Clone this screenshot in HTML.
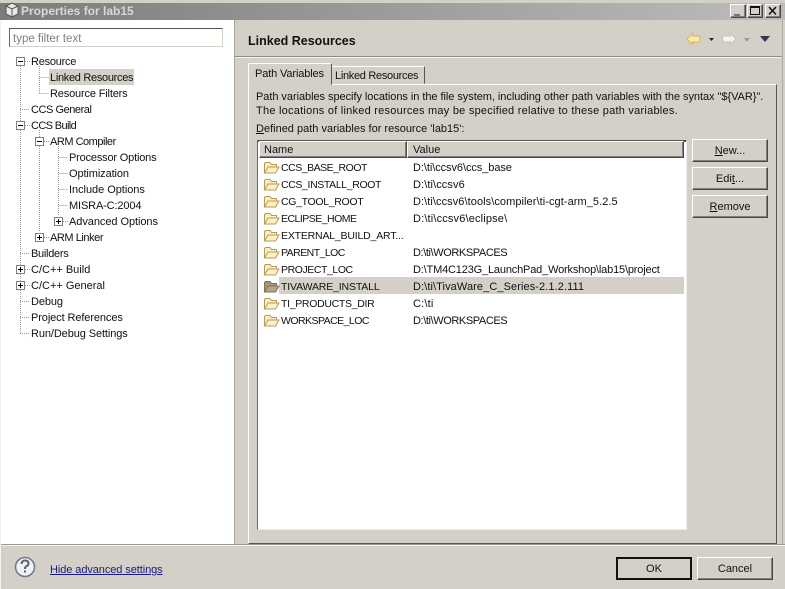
<!DOCTYPE html>
<html><head><meta charset="utf-8"><style>
html,body{margin:0;padding:0;width:785px;height:589px;overflow:hidden;background:#d4d0c8}
body{position:relative;font-family:"Liberation Sans",sans-serif;font-size:11px;color:#111}
.a,.t,.b{position:absolute}
.t{white-space:nowrap;line-height:14px;height:14px}
.n{font-size:10.5px}
.b{box-sizing:border-box;background:#d4d0c8;border:1px solid;border-color:#fff #484848 #484848 #fff;box-shadow:inset -1px -1px 0 #808080;text-align:center;line-height:23px}
svg{position:absolute;left:0;top:0}
u{text-underline-offset:1px}
</style></head><body>
<div class="a" style="left:0;top:0;width:785px;height:3px;background:#d4d0c8"></div>
<div class="a" style="left:0;top:3px;width:785px;height:17px;background:linear-gradient(90deg,#7c7c7c,#bcbcbc)"></div>
<div class="t" style="left:21px;top:4px;color:#d8d8d8;font-weight:bold;font-size:12px;line-height:15px">Properties for lab15</div>
<div class="a" style="left:1px;top:20px;width:233px;height:524px;background:#fff"></div>
<div class="a" style="left:234px;top:20px;width:1px;height:524px;background:#a8a59e"></div>
<div class="a" style="left:0;top:544px;width:785px;height:1px;background:#9a978f"></div>
<div class="a" style="left:0;top:545px;width:785px;height:1px;background:#f4f3ef"></div>
<div class="a" style="left:782px;top:20px;width:1px;height:525px;background:#aaa"></div>
<div class="a" style="left:0;top:20px;width:1px;height:569px;background:#f4f3ef"></div>
<div class="a" style="box-sizing:border-box;left:9px;top:28px;width:214px;height:19px;background:#fff;border:1px solid;border-color:#555 #d4d0c8 #d4d0c8 #666"></div>
<div class="t" style="left:13px;top:32px;color:#808080;font-size:11.5px">type filter text</div>

<div class="a" style="left:49px;top:69px;width:85px;height:16px;background:#d4d0c8"></div>
<svg width="785" height="589">
<defs>
<g id="fd"><path d="M.5 12V2.500L1.500 1.500H6L7.500 3.500H12.500V6" fill="#fbeec3" stroke="#b59a55"/><path d="M.5 12L4 6H15L11.500 12Z" fill="#fdf1c8" stroke="#b59a55"/></g>
<g id="pl"><rect x=".5" y=".5" width="8" height="8" fill="#fff" stroke="#808080"/><path d="M2 4.500H7" stroke="#000"/></g>
<g id="pp"><rect x=".5" y=".5" width="8" height="8" fill="#fff" stroke="#808080"/><path d="M2 4.500H7M4.500 2V7" stroke="#000"/></g>
</defs>
<g stroke="#999" stroke-dasharray="1 1" fill="none">
<path d="M20.500 66V333M39.500 66V93M39.500 77.500H49M39.500 93.500H49M25 61.500H30M20 109.500H30M25 125.500H30M20 253.500H30M25 269.500H30M25 285.500H30M20 301.500H30M20 317.500H30M20 333.500H30"/>
<path d="M39.500 130V232M44 141.500H49M58.500 146V216M58.500 157.500H68M58.500 173.500H68M58.500 189.500H68M58.500 205.500H68M63 221.500H68M44 237.500H49"/>
</g>
<use href="#pl" x="16" y="57"/><use href="#pl" x="16" y="121"/><use href="#pl" x="35" y="137"/>
<use href="#pp" x="54" y="217"/><use href="#pp" x="35" y="233"/><use href="#pp" x="16" y="265"/><use href="#pp" x="16" y="281"/>
</svg>
<div class="t" style="left:31px;top:55px;letter-spacing:-.24px">Resource</div>
<div class="t" style="left:50px;top:71px;letter-spacing:-.3px">Linked Resources</div>
<div class="t" style="left:50px;top:87px;letter-spacing:-.16px">Resource Filters</div>
<div class="t" style="left:31px;top:103px;letter-spacing:-.45px">CCS General</div>
<div class="t" style="left:31px;top:119px;letter-spacing:-.63px">CCS Build</div>
<div class="t" style="left:50px;top:135px;letter-spacing:-.48px">ARM Compiler</div>
<div class="t" style="left:69px;top:151px;letter-spacing:-.18px">Processor Options</div>
<div class="t" style="left:69px;top:167px;letter-spacing:-.1px">Optimization</div>
<div class="t" style="left:69px;top:183px;letter-spacing:-.04px">Include Options</div>
<div class="t" style="left:69px;top:199px;letter-spacing:-.14px">MISRA-C:2004</div>
<div class="t" style="left:69px;top:215px;letter-spacing:-.06px">Advanced Options</div>
<div class="t" style="left:50px;top:231px;letter-spacing:-.44px">ARM Linker</div>
<div class="t" style="left:31px;top:247px;letter-spacing:-.28px">Builders</div>
<div class="t" style="left:31px;top:263px">C/C++ Build</div>
<div class="t" style="left:31px;top:279px">C/C++ General</div>
<div class="t" style="left:31px;top:295px;letter-spacing:-.12px">Debug</div>
<div class="t" style="left:31px;top:311px;letter-spacing:-.1px">Project References</div>
<div class="t" style="left:31px;top:327px;letter-spacing:-.1px">Run/Debug Settings</div>

<div class="t" style="left:248px;top:34px;font-weight:bold;font-size:12.5px">Linked Resources</div>
<div class="a" style="left:235px;top:56px;width:547px;height:1px;background:#8f8c85"></div>
<div class="a" style="left:235px;top:57px;width:547px;height:1px;background:#f4f3ef"></div>

<div class="a" style="box-sizing:border-box;left:248px;top:84px;width:529px;height:460px;border:1px solid;border-color:#fff #555 #555 #fff"></div>
<div class="a" style="box-sizing:border-box;left:331px;top:66px;width:94px;height:18px;border:1px solid;border-color:#fff #555 transparent #fff;border-radius:2px 2px 0 0"></div>
<div class="a" style="box-sizing:border-box;left:248px;top:63px;width:84px;height:22px;background:#d4d0c8;border:1px solid;border-color:#fff #555 #d4d0c8 #fff;border-radius:2px 2px 0 0"></div>
<div class="t" style="left:255px;top:67px;letter-spacing:-.13px">Path Variables</div>
<div class="t" style="left:335px;top:69px;letter-spacing:-.3px">Linked Resources</div>
<div class="t" style="left:256px;top:90px;letter-spacing:-.05px">Path variables specify locations in the file system, including other path variables with the syntax "${VAR}".</div>
<div class="t" style="left:256px;top:104px;letter-spacing:.24px">The locations of linked resources may be specified relative to these path variables.</div>
<div class="t" style="left:256px;top:122px"><u>D</u>efined path variables for resource 'lab15':</div>

<div class="a" style="box-sizing:border-box;left:257px;top:140px;width:430px;height:390px;background:#fff;border:1px solid;border-color:#555 #eee #eee #666;box-shadow:inset 0 1px 0 #404040"></div>
<div class="b" style="left:259px;top:141px;width:148px;height:17px"></div>
<div class="b" style="left:407px;top:141px;width:277px;height:17px"></div>
<div class="t" style="left:264px;top:143px">Name</div>
<div class="t" style="left:413px;top:143px">Value</div>

<div class="a" style="left:279px;top:277px;width:405px;height:17px;background:#d4d0c8"></div>
<svg width="785" height="589">
<use href="#fd" x="264" y="161"/><use href="#fd" x="264" y="178"/><use href="#fd" x="264" y="195"/><use href="#fd" x="264" y="212"/><use href="#fd" x="264" y="229"/><use href="#fd" x="264" y="246"/><use href="#fd" x="264" y="263"/>
<g transform="translate(264 280)"><path d="M.5 12V2.500L1.500 1.500H6L7.500 3.500H12.500V6" fill="#a89a78" stroke="#7b7058"/><path d="M.5 12L4 6H15L11.500 12Z" fill="#b3a686" stroke="#7b7058"/></g>
<use href="#fd" x="264" y="297"/><use href="#fd" x="264" y="314"/>
<path d="M687 39L692.500 33.500V36H700V42H692.500V44.500Z" fill="#fbe9a8" stroke="#d9b45a"/>
<path d="M709 38H714L711.500 41Z" fill="#222"/>
<path d="M736 39L730.500 33.500V36H722.500V42H730.500V44.500Z" fill="#f2f2ee" stroke="#c4c2bc"/>
<path d="M744 38H749.500L746.800 42Z" fill="#999"/>
<path d="M760 36H770L765 42Z" fill="#3a3050"/>
<circle cx="25" cy="567" r="9.500" fill="#f0f1f6" stroke="#6f7688" stroke-width="1.500"/>
<path d="M21.500 564Q22 560.500 25 560.500Q28.500 560.500 28.500 563.500Q28.500 565.500 26 566.500Q25 567.200 25 569" fill="none" stroke="#5a6078" stroke-width="2"/>
<rect x="24" y="570.500" width="2" height="2" fill="#5a6078"/>
</svg>
<div class="t n" style="left:281px;top:161px;letter-spacing:-.48px">CCS_BASE_ROOT</div><div class="t" style="left:413px;top:161px;letter-spacing:-.07px">D:\ti\ccsv6\ccs_base</div>
<div class="t n" style="left:281px;top:178px;letter-spacing:-.37px">CCS_INSTALL_ROOT</div><div class="t" style="left:413px;top:178px;letter-spacing:.1px">D:\ti\ccsv6</div>
<div class="t n" style="left:281px;top:195px;letter-spacing:-.32px">CG_TOOL_ROOT</div><div class="t" style="left:413px;top:195px;letter-spacing:.07px">D:\ti\ccsv6\tools\compiler\ti-cgt-arm_5.2.5</div>
<div class="t n" style="left:281px;top:212px;letter-spacing:-.52px">ECLIPSE_HOME</div><div class="t" style="left:413px;top:212px;letter-spacing:.16px">D:\ti\ccsv6\eclipse\</div>
<div class="t n" style="left:281px;top:229px;letter-spacing:-.19px">EXTERNAL_BUILD_ART...</div>
<div class="t n" style="left:281px;top:246px;letter-spacing:-.54px">PARENT_LOC</div><div class="t" style="left:413px;top:246px;letter-spacing:-.4px">D:\ti\WORKSPACES</div>
<div class="t n" style="left:281px;top:263px;letter-spacing:-.43px">PROJECT_LOC</div><div class="t" style="left:413px;top:263px;letter-spacing:-.17px">D:\TM4C123G_LaunchPad_Workshop\lab15\project</div>
<div class="t n" style="left:281px;top:280px;letter-spacing:-.15px">TIVAWARE_INSTALL</div><div class="t" style="left:413px;top:280px;letter-spacing:.09px">D:\ti\TivaWare_C_Series-2.1.2.111</div>
<div class="t n" style="left:281px;top:297px;letter-spacing:-.31px">TI_PRODUCTS_DIR</div><div class="t" style="left:413px;top:297px;letter-spacing:.2px">C:\ti</div>
<div class="t n" style="left:281px;top:314px;letter-spacing:-.54px">WORKSPACE_LOC</div><div class="t" style="left:413px;top:314px;letter-spacing:-.4px">D:\ti\WORKSPACES</div>

<div class="b" style="left:692px;top:139px;width:76px;height:23px"><u>N</u>ew...</div>
<div class="b" style="left:692px;top:167px;width:76px;height:23px">Edi<u>t</u>...</div>
<div class="b" style="left:692px;top:195px;width:76px;height:23px"><u>R</u>emove</div>

<div class="t" style="left:50px;top:563px;color:#1a1a80;text-decoration:underline;letter-spacing:-.08px">Hide advanced settings</div>
<div class="b" style="left:616px;top:557px;width:76px;height:23px;border:2px solid #111;line-height:21px;box-shadow:none">OK</div>
<div class="b" style="left:697px;top:557px;width:76px;height:23px;line-height:22px">Cancel</div>

<div class="b" style="left:730px;top:4px;width:16px;height:14px;line-height:12px;font-size:10px;color:#777"><span style="position:absolute;left:3px;top:9px;width:6px;height:2px;background:#777"></span></div>
<div class="b" style="left:747px;top:4px;width:16px;height:14px"><span style="position:absolute;box-sizing:border-box;left:2px;top:1px;width:10px;height:9px;border:1px solid #111;border-top-width:2px"></span></div>
<div class="b" style="left:765px;top:4px;width:16px;height:14px"><svg width="14" height="12"><path d="M3 2L10 9.500M10 2L3 9.500" stroke="#111" stroke-width="1.500"/></svg></div>
<svg width="20" height="20" style="left:3px;top:2px"><path d="M9 1L15 4V12L9 15L3 12V4Z" fill="#e8e8e8" stroke="#555"/><path d="M3 4L9 7L15 4M9 7V15" stroke="#555" fill="none"/></svg>
</body></html>
